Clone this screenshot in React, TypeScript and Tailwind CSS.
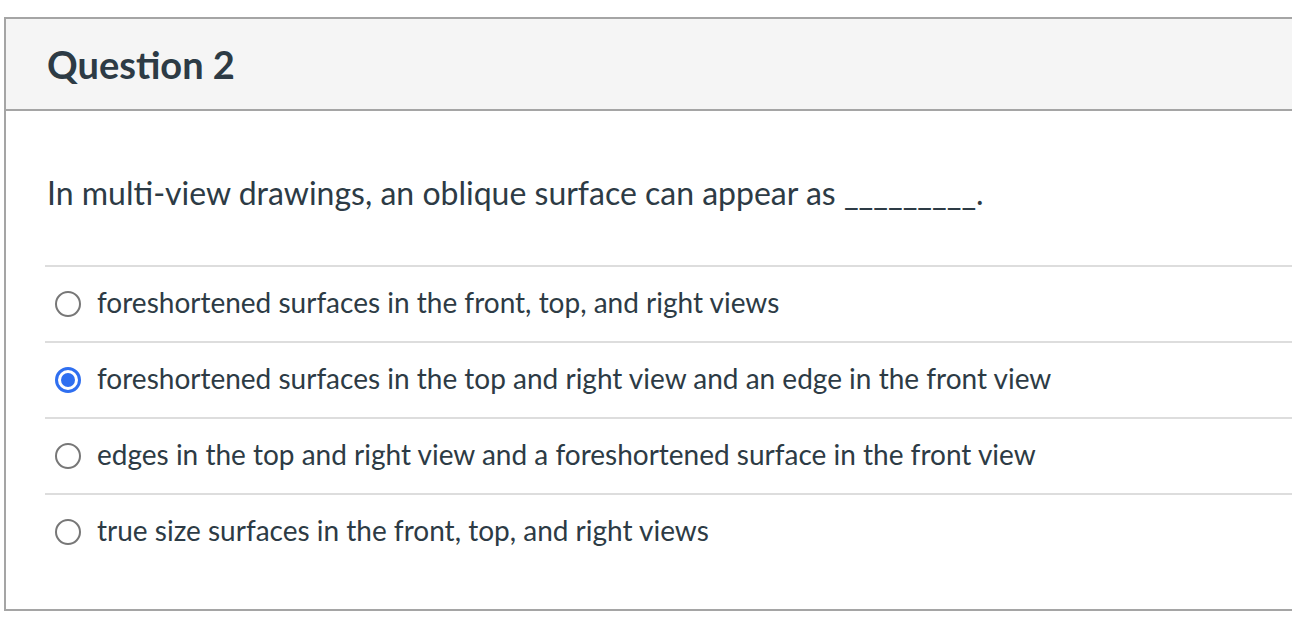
const answers = [
  { id: 'a1', text: 'foreshortened surfaces in the front, top, and right views', checked: false },
  { id: 'a2', text: 'foreshortened surfaces in the top and right view and an edge in the front view', checked: true },
  { id: 'a3', text: 'edges in the top and right view and a foreshortened surface in the front view', checked: false },
  { id: 'a4', text: 'true size surfaces in the front, top, and right views', checked: false },
];

function Radio({ checked }: { checked: boolean }) {
  if (checked) {
    return (
      <span className="flex h-[26px] w-[26px] shrink-0 items-center justify-center rounded-full border-[3px] border-[#2f6ff0] bg-white">
        <span className="h-[14px] w-[14px] rounded-full bg-[#2f6ff0]" />
      </span>
    );
  }
  return <span className="h-[26px] w-[26px] shrink-0 rounded-full border-2 border-[#777777] bg-white" />;
}

export default function App() {
  return (
    <div className="min-h-[626px] overflow-hidden bg-white pt-[17px] pl-[4px] font-['Lato','Noto_Sans',sans-serif] text-[#2d3b45]">
      <div className="border-y-2 border-l-2 border-[#a5a5a5]">
        <div className="flex h-[92px] items-center border-b-2 border-[#a5a5a5] bg-[#f5f5f5] pl-[41px]">
          <h2 className="text-[38px] font-bold leading-none">Question 2</h2>
        </div>
        <div className="pl-[39px] pb-[40px]">
          <p className="ml-[2px] pt-[64px] pb-[54px] text-[32px] leading-[36px]">
            In multi-view drawings, an oblique surface can appear as _________.
          </p>
          <ul>
            {answers.map((a) => (
              <li key={a.id} className="flex h-[76px] items-center gap-[16px] border-t-2 border-[#dddddd] pl-[10px]">
                <Radio checked={a.checked} />
                <span className="pb-[4px] text-[28px] leading-none">{a.text}</span>
              </li>
            ))}
          </ul>
        </div>
      </div>
    </div>
  );
}
